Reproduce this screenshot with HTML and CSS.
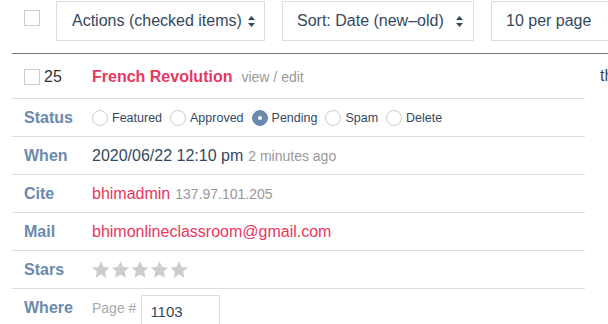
FILE: index.html
```html
<!DOCTYPE html>
<html lang="en">
<head>
    <meta charset="UTF-8">
    <title>Comments</title>
    <link rel="stylesheet" href="styles.css">
</head>
<body>
    <div class="page">
        <!--toolbar-->
        <div class="toolbar">
            <span class="check"></span>
            <div class="select select-actions"><span>Actions (checked items)</span>
                <svg class="caret" width="7" height="11" viewBox="0 0 7 11"><path d="M3.5 0L7 4H0z M3.5 11L0 7h7z" fill="#34495e"/></svg>
            </div>
            <div class="select select-sort"><span>Sort: Date (new–old)</span>
                <svg class="caret" width="7" height="11" viewBox="0 0 7 11"><path d="M3.5 0L7 4H0z M3.5 11L0 7h7z" fill="#34495e"/></svg>
            </div>
            <div class="select select-per">10 per page</div>
        </div>

        <div class="content">
            <!--comment card-->
            <div class="comment">
                <div class="row row-head">
                    <div class="cell-label"><span class="check"></span><span class="num">25</span></div>
                    <div class="cell-value"><a class="title" href="#">French Revolution</a> <span class="links">view / edit</span></div>
                </div>
                <div class="row">
                    <div class="cell-label label">Status</div>
                    <div class="cell-value radios">
                        <label class="radio"><span class="dot"></span>Featured</label>
                        <label class="radio"><span class="dot"></span>Approved</label>
                        <label class="radio"><span class="dot on"></span>Pending</label>
                        <label class="radio"><span class="dot"></span>Spam</label>
                        <label class="radio"><span class="dot"></span>Delete</label>
                    </div>
                </div>
                <div class="row">
                    <div class="cell-label label">When</div>
                    <div class="cell-value">2020/06/22 12:10 pm <span class="muted">2 minutes ago</span></div>
                </div>
                <div class="row">
                    <div class="cell-label label">Cite</div>
                    <div class="cell-value"><span class="pink">bhimadmin</span> <span class="muted">137.97.101.205</span></div>
                </div>
                <div class="row">
                    <div class="cell-label label">Mail</div>
                    <div class="cell-value pink">bhimonlineclassroom@gmail.com</div>
                </div>
                <div class="row">
                    <div class="cell-label label">Stars</div>
                    <div class="cell-value stars">
                        <svg width="98" height="18" viewBox="0 0 98 18">
                            <defs><path id="st" d="M9 0.3l2.6 5.6 6.1 0.6-4.6 4.1 1.3 6.1L9 13.6 3.6 16.7l1.3-6.1L0.3 6.5l6.1-0.6z"/></defs>
                            <use href="#st" x="0" fill="#ccc"/>
                            <use href="#st" x="19.5" fill="#ccc"/>
                            <use href="#st" x="39" fill="#ccc"/>
                            <use href="#st" x="58.5" fill="#ccc"/>
                            <use href="#st" x="78" fill="#ccc"/>
                        </svg>
                    </div>
                </div>
                <div class="row">
                    <div class="cell-label label">Where</div>
                    <div class="cell-value"><span class="page-lbl">Page #</span><span class="input">1103</span></div>
                </div>
            </div>

            <!--side text-->
            <div class="side">th</div>
        </div>
    </div>
</body>
</html>
```

FILE: styles.css
```css
* {
    margin: 0;
    padding: 0;
    box-sizing: border-box;
}
body {
    font-family: "Liberation Sans", Arial, sans-serif;
    color: #34495e;
    background: #fff;
    overflow: hidden;
}
.page {
    padding-left: 12px;
    width: 700px;
}
.toolbar {
    display: flex;
    align-items: flex-start;
    height: 54px;
    padding-top: 1px;
    padding-left: 12px;
    border-bottom: 1px solid #777;
}
.check {
    display: inline-block;
    width: 16px;
    height: 16px;
    border: 1px solid #ccc;
    background: #fff;
}
.toolbar .check {
    margin-top: 9px;
    margin-right: 16px;
}
.select {
    display: flex;
    align-items: center;
    justify-content: space-between;
    flex-shrink: 0;
    height: 40px;
    padding: 0 9px 0 15px;
    border: 1px solid #ddd;
    font-size: 16px;
    color: #34495e;
    white-space: nowrap;
}
.select-actions {
    width: 209px;
    margin-right: 17px;
}
.select-sort {
    width: 192px;
    padding-left: 14px;
    padding-right: 10px;
    margin-right: 17px;
}
.select-per {
    width: 160px;
    padding-left: 14px;
}
.caret {
    flex-shrink: 0;
    margin-left: 4px;
}

.content {
    display: flex;
}
.comment {
    width: 573px;
    flex-shrink: 0;
}
.row {
    display: flex;
    align-items: center;
    height: 38px;
    padding-left: 12px;
    border-bottom: 1px solid #ddd;
    font-size: 16px;
}
.row:last-child {
    border-bottom: none;
}
.row-head {
    height: 45px;
    padding-top: 2px;
}
.cell-label {
    display: flex;
    align-items: center;
    width: 68px;
    flex-shrink: 0;
}
.label {
    font-weight: bold;
    color: #6a8aad;
}
.num {
    margin-left: 4px;
    color: #333;
}
.cell-value {
    display: flex;
    align-items: center;
    white-space: nowrap;
}
.title {
    font-size: 16px;
    font-weight: bold;
    color: #e8375f;
    text-decoration: none;
    margin-right: 9px;
}
.links {
    font-size: 14px;
    color: #999;
}
.muted {
    font-size: 14px;
    color: #999;
    margin-left: 5px;
}
.pink {
    color: #e8375f;
}
.radios {
    font-size: 12.5px;
}
.radio {
    display: flex;
    align-items: center;
    margin-right: 8px;
}
.dot {
    display: inline-block;
    width: 16px;
    height: 16px;
    margin-right: 4px;
    border: 1px solid #ccc;
    border-radius: 50%;
    background: #fff;
}
.dot.on {
    position: relative;
    border-color: #6a8aad;
    background: #6a8aad;
}
.dot.on::after {
    content: "";
    position: absolute;
    left: 5px;
    top: 5px;
    width: 4px;
    height: 4px;
    border-radius: 50%;
    background: #fff;
}
.stars svg {
    display: block;
}
.page-lbl {
    font-size: 14px;
    color: #aaa;
    margin-right: 5px;
}
.input {
    display: inline-block;
    width: 79px;
    height: 31px;
    margin-top: 5px;
    padding: 7px 0 0 8px;
    border: 1px solid #ddd;
    font-size: 15px;
    color: #34495e;
}
.side {
    padding: 13px 0 0 15px;
    font-size: 16px;
    color: #34495e;
    white-space: nowrap;
}
```
